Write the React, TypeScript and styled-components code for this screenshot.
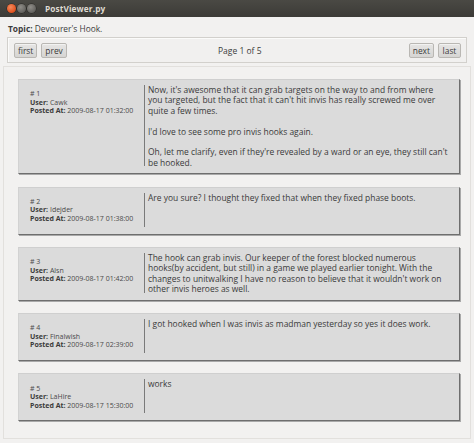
import React from "react";
import styled, { createGlobalStyle } from "styled-components";

const GlobalStyle = createGlobalStyle`
  html, body { margin: 0; padding: 0; background: #f2f1f0; }
  * { box-sizing: border-box; }
  body { font-family: "Open Sans", "Noto Sans", sans-serif; }
`;

const Window = styled.div`
  width: 474px;
  height: 443px;
  background: #f2f1f0;
  overflow: hidden;
  display: flex;
  flex-direction: column;
  color: #3c3c3c;
`;

const TitleBar = styled.div`
  height: 17px;
  flex: none;
  display: flex;
  align-items: center;
  padding-left: 7px;
  background: linear-gradient(#4a4944, #3c3b37);
`;

const WinButtons = styled.div`
  display: flex;
  gap: 1px;
  width: 38px;
`;

const WinButton = styled.span<{ $kind: "close" | "min" | "max" }>`
  width: 9px;
  height: 9px;
  border-radius: 50%;
  background: ${(p) =>
    p.$kind === "close"
      ? "radial-gradient(circle at 40% 35%, #f58a5c, #e0501d 70%)"
      : "radial-gradient(circle at 40% 35%, #8f8d88, #5f5e5a 75%)"};
  box-shadow: 0 0 0 0.5px rgba(0, 0, 0, 0.4);
`;

const Title = styled.span`
  font-size: 8.3px;
  font-weight: 700;
  color: #dfdbd2;
  letter-spacing: 0.1px;
`;

const Main = styled.div`
  flex: 1;
  display: flex;
  flex-direction: column;
  padding: 0 7px 4px 7px;
  min-height: 0;
`;

const TopicLine = styled.div`
  font-size: 8.4px;
  line-height: 11px;
  margin: 6px 0 3px 1px;
  b { font-weight: 700; }
`;

const NavBar = styled.div`
  height: 26px;
  flex: none;
  display: flex;
  align-items: center;
  justify-content: space-between;
  padding: 0 5px 0 6px;
  border: 1px solid #d2d0cc;
  box-shadow: inset 1px 1px 0 #fbfbfa;
  background: #f1f0ef;
`;

const ButtonGroup = styled.div`
  display: flex;
  gap: 4px;
`;

const NavButton = styled.button`
  font-family: "Open Sans", "Noto Sans", sans-serif;
  font-size: 8.4px;
  color: #3c3c3c;
  height: 15px;
  min-width: 23px;
  padding: 0 3px;
  line-height: 13px;
  border: 1px solid #b9b7b3;
  border-radius: 2px;
  background: linear-gradient(#e6e5e4, #d6d5d3);
  box-shadow: inset 0 1px 0 #f2f2f1;
`;

const PageLabel = styled.span`
  font-size: 8.5px;
  margin-left: 4px;
`;

const ScrollArea = styled.div`
  flex: 1;
  margin: 3px -4px 0 -4px;
  border: 1px solid #e2e0dd;
  padding: 12px 10px 0 14px;
  display: flex;
  flex-direction: column;
  gap: 12.4px;
  overflow: hidden;
`;

const Card = styled.div`
  display: flex;
  align-items: stretch;
  min-height: 48px;
  padding: 5px 0 5px 0;
  background: #dbdbdb;
  border: 1px solid;
  border-color: #cfcfcf #6e6e6e #6e6e6e #d2d2d2;
  box-shadow: 1px 1px 0 #a9a9a9;
  flex: none;
`;

const Meta = styled.div`
  width: 125px;
  flex: none;
  padding-left: 11px;
  align-self: flex-start;
  margin-top: 5.3px;
  font-size: 7px;
  line-height: 8.5px;
  color: #4a4a4a;
  white-space: nowrap;
  b { font-weight: 700; color: #3a3a3a; }
`;

const Separator = styled.div`
  width: 1px;
  flex: none;
  background: #7a7a7a;
  margin-bottom: 2px;
`;

const Body = styled.div`
  flex: 1;
  padding: 0 4px 0 3px;
  font-size: 8.45px;
  line-height: 10.4px;
  color: #3a3a3a;
  white-space: nowrap;
`;

const Paragraph = styled.p`
  margin: 0;
  & + & { margin-top: 10.4px; }
`;

type Post = { n: number; user: string; at: string; text: string[][] };

const posts: Post[] = [
  {
    n: 1,
    user: "Cawk",
    at: "2009-08-17 01:32:00",
    text: [
      [
        "Now, it's awesome that it can grab targets on the way to and from where",
        "you targeted, but the fact that it can't hit invis has really screwed me over",
        "quite a few times.",
      ],
      ["I'd love to see some pro invis hooks again."],
      [
        "Oh, let me clarify, even if they're revealed by a ward or an eye, they still can't",
        "be hooked.",
      ],
    ],
  },
  {
    n: 2,
    user: "Idejder",
    at: "2009-08-17 01:38:00",
    text: [["Are you sure? I thought they fixed that when they fixed phase boots."]],
  },
  {
    n: 3,
    user: "Alsn",
    at: "2009-08-17 01:42:00",
    text: [
      [
        "The hook can grab invis. Our keeper of the forest blocked numerous",
        "hooks(by accident, but still) in a game we played earlier tonight. With the",
        "changes to unitwalking I have no reason to believe that it wouldn't work on",
        "other invis heroes as well.",
      ],
    ],
  },
  {
    n: 4,
    user: "Finalwish",
    at: "2009-08-17 02:39:00",
    text: [["I got hooked when I was invis as madman yesterday so yes it does work."]],
  },
  {
    n: 5,
    user: "LaHire",
    at: "2009-08-17 15:30:00",
    text: [["works"]],
  },
];

export default function App() {
  return (
    <>
      <GlobalStyle />
      <Window>
        <TitleBar>
          <WinButtons>
            <WinButton $kind="close" />
            <WinButton $kind="min" />
            <WinButton $kind="max" />
          </WinButtons>
          <Title>PostViewer.py</Title>
        </TitleBar>
        <Main>
          <TopicLine>
            <b>Topic:</b> Devourer's Hook.
          </TopicLine>
          <NavBar>
            <ButtonGroup>
              <NavButton>first</NavButton>
              <NavButton>prev</NavButton>
            </ButtonGroup>
            <PageLabel>Page 1 of 5</PageLabel>
            <ButtonGroup>
              <NavButton>next</NavButton>
              <NavButton>last</NavButton>
            </ButtonGroup>
          </NavBar>
          <ScrollArea>
            {posts.map((p) => (
              <Card key={p.n}>
                <Meta>
                  <div># {p.n}</div>
                  <div>
                    <b>User:</b> {p.user}
                  </div>
                  <div>
                    <b>Posted At:</b> {p.at}
                  </div>
                </Meta>
                <Separator />
                <Body>
                  {p.text.map((lines, i) => (
                    <Paragraph key={i}>
                      {lines.map((l, j) => (
                        <React.Fragment key={j}>
                          {j > 0 && <br />}
                          {l}
                        </React.Fragment>
                      ))}
                    </Paragraph>
                  ))}
                </Body>
              </Card>
            ))}
          </ScrollArea>
        </Main>
      </Window>
    </>
  );
}
